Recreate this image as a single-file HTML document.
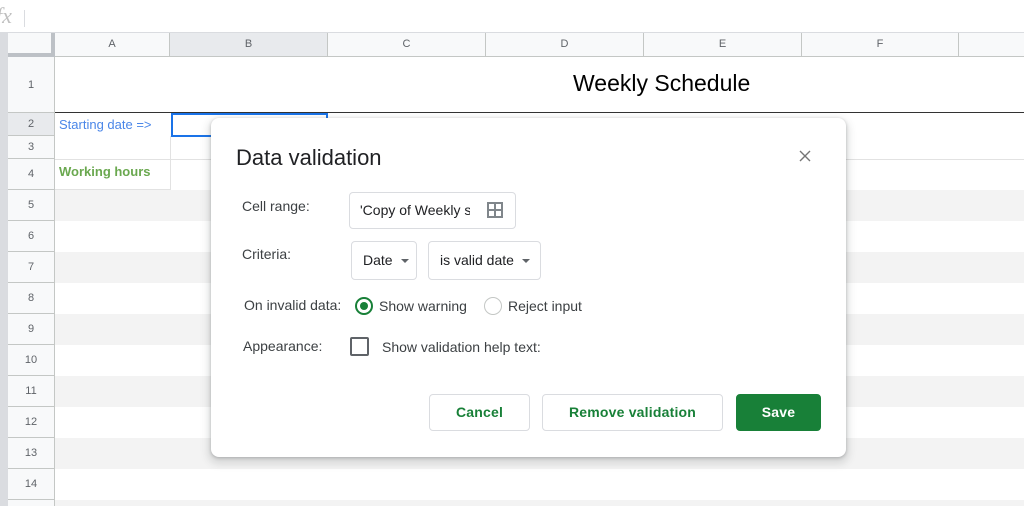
<!DOCTYPE html>
<html><head><meta charset="utf-8"><style>
*{margin:0;padding:0;box-sizing:border-box}
body{width:1024px;height:506px;overflow:hidden;background:#fff;font-family:"Liberation Sans",Arial,sans-serif;position:relative}
.a{position:absolute}
.ch{position:absolute;top:33px;height:24px;background:#f8f9fa;border-right:1px solid #c4c7c5;border-bottom:1px solid #c4c7c5;font-size:11px;color:#5f6368;text-align:center;line-height:23px}
.rh{position:absolute;left:8px;width:47px;background:#f8f9fa;border-bottom:1px solid #c4c7c5;border-right:1px solid #c4c7c5;font-size:11px;color:#5f6368;text-align:center}
.band{position:absolute;left:55px;right:0;background:#f3f3f3}
.lbl{position:absolute;font-size:14px;color:#3c4043}
.box{position:absolute;border:1px solid #dadce0;border-radius:4px;background:#fff;font-size:14px;color:#202124}
.arr{display:inline-block;width:0;height:0;border-left:4px solid transparent;border-right:4px solid transparent;border-top:4px solid #5f6368;vertical-align:middle;margin-left:8px}
.btn{position:absolute;top:394px;height:37px;border:1px solid #dadce0;border-radius:4px;background:#fff;color:#188038;font-size:14px;font-weight:600;text-align:center;line-height:35px;letter-spacing:.2px}
</style></head><body>
<div class="a" style="left:0;top:0;width:1024px;height:33px;background:#fff;border-bottom:1px solid #dadce0"></div>
<div class="a" style="left:-4px;top:3px;font-size:22px;font-style:italic;color:#c0c0c0;font-family:'Liberation Serif',serif">fx</div>
<div class="a" style="left:24px;top:10px;width:1px;height:17px;background:#dadce0"></div>
<div class="a" style="left:0;top:33px;width:8px;height:473px;background:#dadce0"></div>
<div class="a" style="left:8px;top:33px;width:47px;height:24px;background:#f8f9fa;border-right:4px solid #bdc1c6;border-bottom:4px solid #bdc1c6"></div>
<div class="ch" style="left:55px;width:115px">A</div>
<div class="ch" style="left:170px;width:158px;background:#e8eaed">B</div>
<div class="ch" style="left:328px;width:158px">C</div>
<div class="ch" style="left:486px;width:158px">D</div>
<div class="ch" style="left:644px;width:158px">E</div>
<div class="ch" style="left:802px;width:157px">F</div>
<div class="ch" style="left:959px;width:65px;border-right:0"></div>
<div class="band" style="top:190px;height:31px"></div>
<div class="band" style="top:252px;height:31px"></div>
<div class="band" style="top:314px;height:31px"></div>
<div class="band" style="top:376px;height:31px"></div>
<div class="band" style="top:438px;height:31px"></div>
<div class="band" style="top:500px;height:6px"></div>
<div class="rh" style="top:57px;height:56px;line-height:56px">1</div>
<div class="rh" style="top:113px;height:23px;line-height:23px;background:#e8eaed">2</div>
<div class="rh" style="top:136px;height:23px;line-height:23px">3</div>
<div class="rh" style="top:159px;height:31px;line-height:31px">4</div>
<div class="rh" style="top:190px;height:31px;line-height:31px">5</div>
<div class="rh" style="top:221px;height:31px;line-height:31px">6</div>
<div class="rh" style="top:252px;height:31px;line-height:31px">7</div>
<div class="rh" style="top:283px;height:31px;line-height:31px">8</div>
<div class="rh" style="top:314px;height:31px;line-height:31px">9</div>
<div class="rh" style="top:345px;height:31px;line-height:31px">10</div>
<div class="rh" style="top:376px;height:31px;line-height:31px">11</div>
<div class="rh" style="top:407px;height:31px;line-height:31px">12</div>
<div class="rh" style="top:438px;height:31px;line-height:31px">13</div>
<div class="rh" style="top:469px;height:31px;line-height:31px">14</div>
<div class="rh" style="top:500px;height:6px;border-bottom:0"></div>
<div class="a" style="left:170px;top:136px;width:1px;height:54px;background:#e2e2e2"></div>
<div class="a" style="left:55px;top:159px;width:969px;height:1px;background:#e2e2e2"></div>
<div class="a" style="left:55px;top:189px;width:116px;height:1px;background:#e2e2e2"></div>
<div class="a" style="left:55px;top:112px;width:969px;height:1px;background:#333"></div>
<div class="a" style="left:573px;top:70px;font-size:23px;color:#000">Weekly Schedule</div>
<div class="a" style="left:59px;top:117px;font-size:13px;color:#4a86e8">Starting date =&gt;</div>
<div class="a" style="left:59px;top:164px;font-size:13px;color:#6aa84f;font-weight:bold">Working hours</div>
<div class="a" style="left:171px;top:113px;width:157px;height:24px;border:2px solid #1a73e8"></div>
<div class="a" style="left:211px;top:118px;width:635px;height:339px;background:#fff;border-radius:8px;box-shadow:0 4px 8px 3px rgba(60,64,67,.15),0 1px 3px rgba(60,64,67,.3)"></div>
<div class="a" style="left:236px;top:145px;font-size:22px;color:#202124">Data validation</div>
<svg class="a" style="left:799px;top:150px" width="12" height="12"><path d="M1 1L11 11M11 1L1 11" stroke="#757575" stroke-width="1.4"/></svg>
<div class="lbl" style="left:242px;top:198px">Cell range:</div>
<div class="box" style="left:349px;top:192px;width:167px;height:37px;line-height:35px;padding-left:10px;overflow:hidden;white-space:nowrap">'Copy of Weekly s</div>
<div class="a" style="left:470px;top:194px;width:40px;height:33px;background:#fff"></div>
<svg class="a" style="left:487px;top:202px" width="16" height="16"><rect x="1" y="1" width="14" height="14" fill="none" stroke="#80868b" stroke-width="2"/><path d="M8 1V15M1 8H15" stroke="#80868b" stroke-width="2"/></svg>
<div class="lbl" style="left:242px;top:246px">Criteria:</div>
<div class="box" style="left:351px;top:241px;width:66px;height:39px;line-height:37px;padding-left:11px">Date<span class="arr"></span></div>
<div class="box" style="left:428px;top:241px;width:113px;height:39px;line-height:37px;padding-left:11px">is valid date<span class="arr"></span></div>
<div class="lbl" style="left:244px;top:297px">On invalid data:</div>
<div class="a" style="left:355px;top:297px;width:18px;height:18px;border:2px solid #188038;border-radius:50%"></div>
<div class="a" style="left:360px;top:302px;width:8px;height:8px;background:#188038;border-radius:50%"></div>
<div class="lbl" style="left:379px;top:298px">Show warning</div>
<div class="a" style="left:484px;top:297px;width:18px;height:18px;border:1px solid #c4c7c5;border-radius:50%"></div>
<div class="lbl" style="left:508px;top:298px">Reject input</div>
<div class="lbl" style="left:243px;top:338px">Appearance:</div>
<div class="a" style="left:350px;top:337px;width:19px;height:19px;border:2px solid #5f6368;border-radius:2px"></div>
<div class="lbl" style="left:382px;top:339px">Show validation help text:</div>
<div class="btn" style="left:429px;width:101px">Cancel</div>
<div class="btn" style="left:542px;width:181px">Remove validation</div>
<div class="btn" style="left:736px;width:85px;background:#188038;border-color:#188038;color:#fff">Save</div>
</body></html>
